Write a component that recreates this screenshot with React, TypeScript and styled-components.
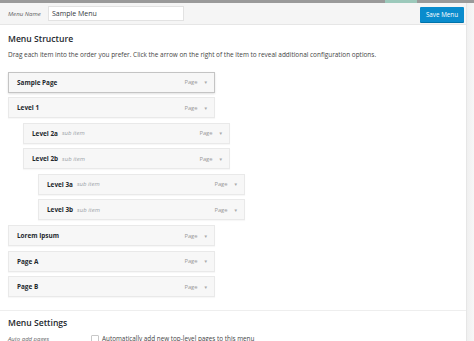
import React from "react";
import styled, { createGlobalStyle } from "styled-components";

const GlobalStyle = createGlobalStyle`
  html, body {
    margin: 0;
    padding: 0;
    background: #f1f1f1;
  }
  body {
    font-family: "Open Sans", "Liberation Sans", sans-serif;
    color: #23282d;
    overflow: hidden;
  }
`;

const Page = styled.div`
  width: 474px;
  height: 341px;
  display: flex;
  flex-direction: column;
  overflow: hidden;
`;

const TopStrip = styled.div`
  height: 3px;
  flex-shrink: 0;
  background: #9a9a9a;
  display: flex;
  justify-content: flex-end;
  padding-right: 57px;
`;

const StripAccent = styled.div`
  width: 32px;
  background: #9cc9bb;
`;

const Frame = styled.div`
  flex: 1;
  display: flex;
`;

const Panel = styled.div`
  width: 466px;
  background: #fff;
  border-right: 1px solid #e6e6e6;
  display: flex;
  flex-direction: column;
`;

const Gutter = styled.div`
  flex: 1;
  background: linear-gradient(to right, #f0f0f0, #f7f7f7);
`;

const Header = styled.div`
  height: 21px;
  background: #f5f5f5;
  border-bottom: 1px solid #e6e6e6;
  display: flex;
  align-items: center;
  padding: 0 0 0 8px;
`;

const NameLabel = styled.span`
  font-size: 6.1px;
  font-style: italic;
  color: #666;
  width: 40px;
`;

const NameInput = styled.div`
  width: 131px;
  height: 13px;
  border: 1px solid #e2e2e2;
  background: #fff;
  display: flex;
  align-items: center;
  padding-left: 3px;
  font-size: 7px;
  color: #32373c;
`;

const Spacer = styled.div`
  flex: 1;
`;

const SaveButton = styled.button`
  height: 15px;
  width: 44px;
  margin-right: 2px;
  margin-top: 1px;
  border: none;
  border-radius: 1px;
  background: #0a8ccd;
  color: #fff;
  font-family: "Open Sans", "Liberation Sans", sans-serif;
  font-size: 6.3px;
  padding: 0;
  box-shadow: 0 1px 0 #0073aa;
`;

const Section = styled.div<{ $divider?: boolean }>`
  padding: ${({ $divider }) => ($divider ? "6px 8px 0" : "8px 8px 0")};
  border-top: ${({ $divider }) => ($divider ? "1px solid #eeeeee" : "none")};
`;

const Heading = styled.h2`
  margin: 0;
  font-size: 8.6px;
  line-height: 12px;
  font-weight: 600;
  color: #23282d;
`;

const Description = styled.p`
  margin: 5px 0 0;
  font-size: 6.45px;
  line-height: 9px;
  color: #444;
`;

const ItemList = styled.div`
  margin-top: 12.5px;
  padding-bottom: 13px;
  display: flex;
  flex-direction: column;
  gap: 4.6px;
`;

const Item = styled.div<{ $depth: number; $active?: boolean }>`
  box-sizing: border-box;
  width: 207px;
  height: 21px;
  margin-left: ${({ $depth }) => $depth * 15}px;
  background: #f7f7f7;
  border: 1px solid ${({ $active }) => ($active ? "#c4c4c4" : "#e9e9e9")};
  box-shadow: ${({ $active }) =>
    $active ? "0 1px 2px rgba(0,0,0,0.12)" : "0 1px 1px rgba(0,0,0,0.03)"};
  display: flex;
  align-items: center;
  padding: 0 6px 0 8px;
`;

const ItemTitle = styled.span`
  font-size: 6.4px;
  font-weight: 700;
  color: #23282d;
`;

const SubLabel = styled.span`
  font-size: 6px;
  font-style: italic;
  color: #a0a5aa;
  margin-left: 4px;
`;

const ItemType = styled.span`
  margin-left: auto;
  font-size: 5.8px;
  color: #999;
`;

const Arrow = styled.span`
  margin-left: 6px;
  font-size: 4.5px;
  color: #aaa;
`;

const SettingRow = styled.div`
  display: flex;
  align-items: center;
  margin-top: 5px;
`;

const SettingLabel = styled.span`
  width: 83px;
  font-size: 6px;
  font-style: italic;
  color: #666;
`;

const Checkbox = styled.span`
  width: 6px;
  height: 6px;
  border: 1px solid #c8c8c8;
  border-radius: 1px;
  background: #fff;
  margin-right: 3px;
`;

const SettingText = styled.span`
  font-size: 6.35px;
  color: #444;
`;

const items = [
  { title: "Sample Page", depth: 0, active: true },
  { title: "Level 1", depth: 0 },
  { title: "Level 2a", depth: 1, sub: true },
  { title: "Level 2b", depth: 1, sub: true },
  { title: "Level 3a", depth: 2, sub: true },
  { title: "Level 3b", depth: 2, sub: true },
  { title: "Lorem Ipsum", depth: 0 },
  { title: "Page A", depth: 0 },
  { title: "Page B", depth: 0 },
];

const App: React.FC = () => {
  return (
    <>
      <GlobalStyle />
      <Page>
        <TopStrip>
          <StripAccent />
        </TopStrip>
        <Frame>
          <Panel>
            <Header>
              <NameLabel>Menu Name</NameLabel>
              <NameInput>Sample Menu</NameInput>
              <Spacer />
              <SaveButton>Save Menu</SaveButton>
            </Header>

            <Section>
              <Heading>Menu Structure</Heading>
              <Description>
                Drag each item into the order you prefer. Click the arrow on the
                right of the item to reveal additional configuration options.
              </Description>
              <ItemList>
                {items.map((item) => (
                  <Item key={item.title} $depth={item.depth} $active={item.active}>
                    <ItemTitle>{item.title}</ItemTitle>
                    {item.sub && <SubLabel>sub item</SubLabel>}
                    <ItemType>Page</ItemType>
                    <Arrow>▼</Arrow>
                  </Item>
                ))}
              </ItemList>
            </Section>

            <Section $divider>
              <Heading>Menu Settings</Heading>
              <SettingRow>
                <SettingLabel>Auto add pages</SettingLabel>
                <Checkbox />
                <SettingText>
                  Automatically add new top-level pages to this menu
                </SettingText>
              </SettingRow>
            </Section>
          </Panel>
          <Gutter />
        </Frame>
      </Page>
    </>
  );
};

export default App;
